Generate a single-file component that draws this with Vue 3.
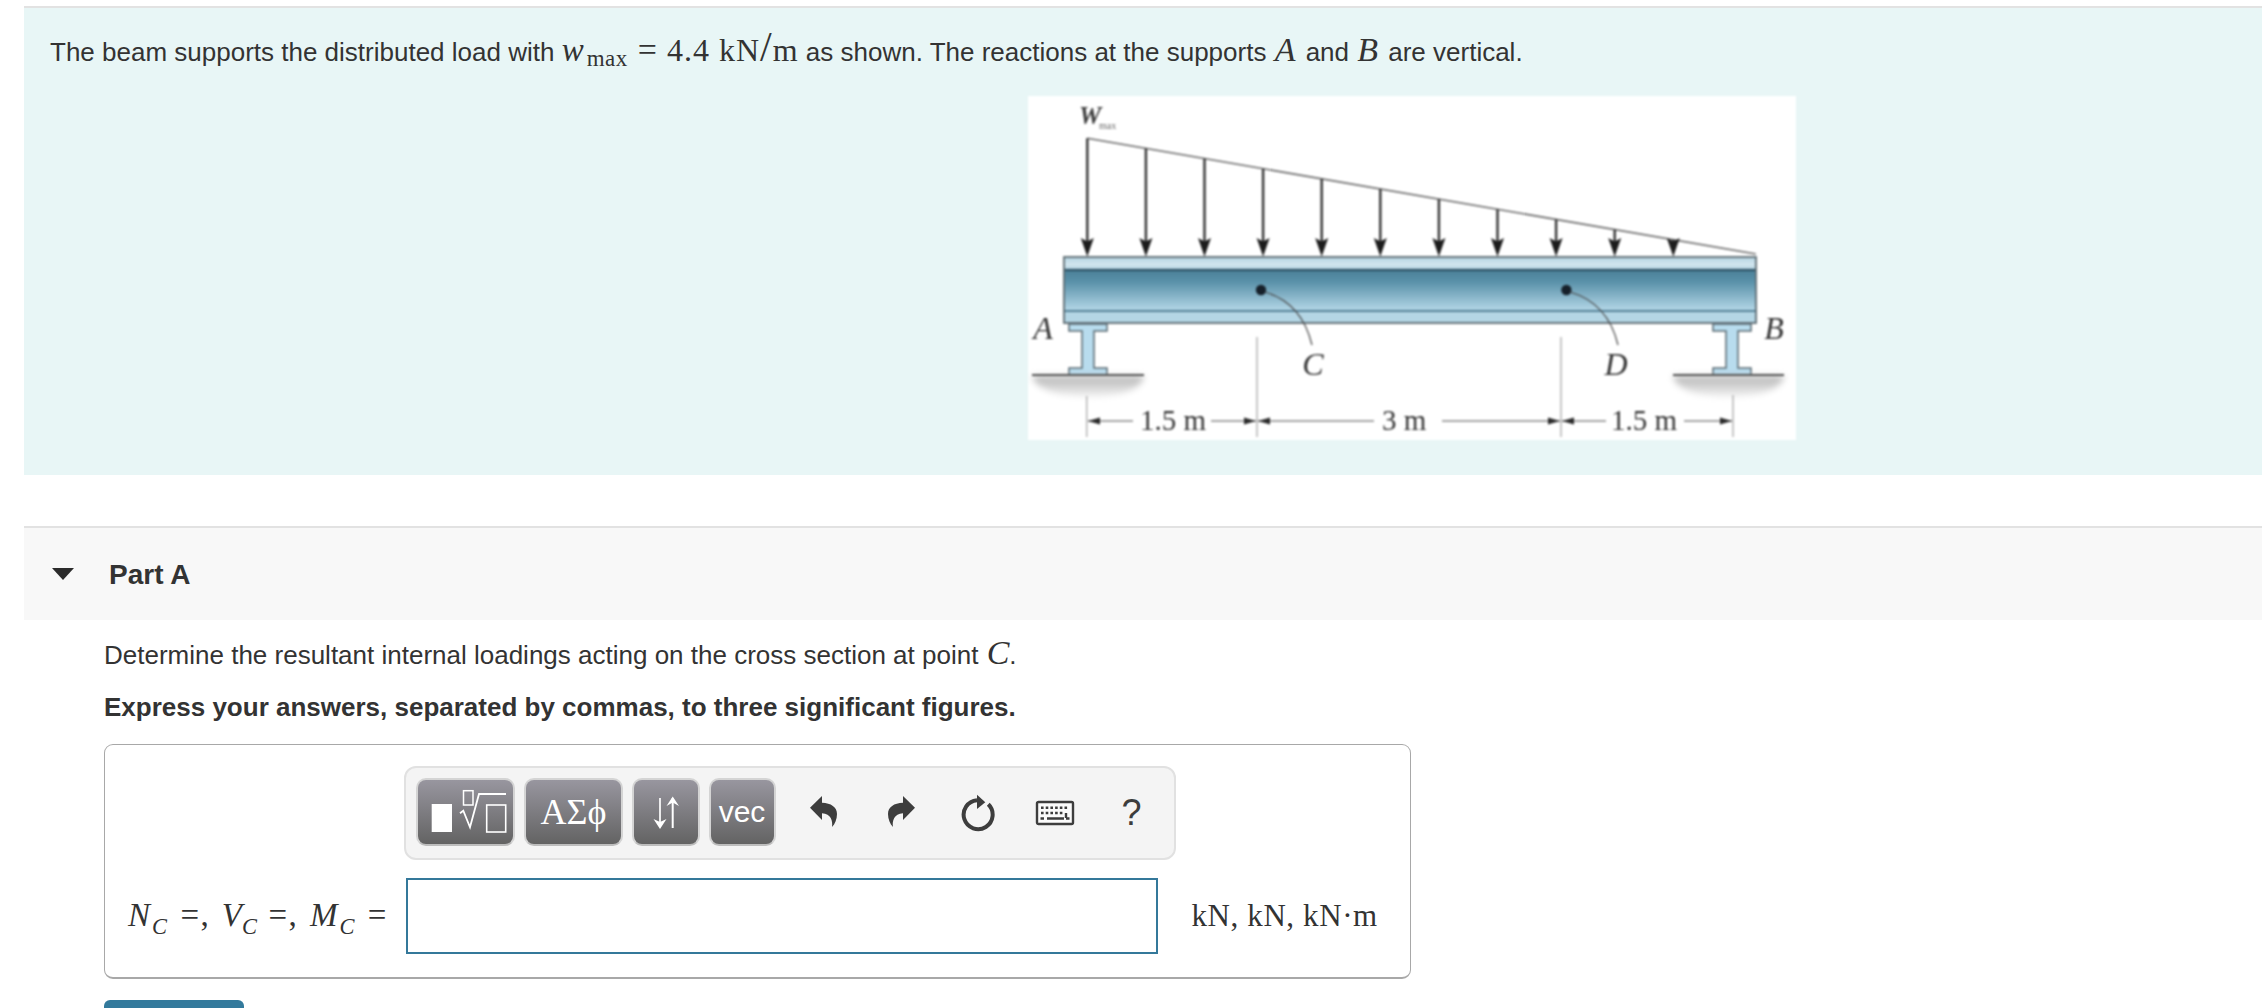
<script setup>
const arrows = Array.from({ length: 11 }, (_, i) => {
  const x = 59.3 + 58.6 * i
  const top = 42.3 + (x - 59.3) * (115.7 / 668.5)
  return { x, top }
})
const supports = [41, 685]
</script>

<template>
  <main class="page">
    <section class="intro">
      <p class="statement">
        The beam supports the distributed load with
        <span class="math"><i class="w">w</i><span class="lower">max</span><span class="eq">=</span>4.4 kN<span class="slash">/</span>m</span>
        as shown. The reactions at the supports <i class="var">A</i> and <i class="var">B</i> are vertical.
      </p>
      <div class="figure">
        <svg class="diagram" width="768" height="344" viewBox="0 0 768 344">
          <defs>
            <linearGradient id="web" x1="0" y1="0" x2="0" y2="1">
              <stop offset="0" stop-color="#4a8098" />
              <stop offset="0.3" stop-color="#5b92aa" />
              <stop offset="1" stop-color="#b5d8e8" />
            </linearGradient>
            <linearGradient id="flange" x1="0" y1="0" x2="0" y2="1">
              <stop offset="0" stop-color="#b4d4e2" />
              <stop offset="0.6" stop-color="#d3e6ef" />
              <stop offset="1" stop-color="#a8ccdc" />
            </linearGradient>
            <linearGradient id="shadow" x1="0" y1="0" x2="0" y2="1">
              <stop offset="0" stop-color="#b4b4b4" />
              <stop offset="1" stop-color="#f4f4f4" />
            </linearGradient>
          </defs>

          <text x="51" y="28" class="load-label">W</text>
          <text x="71" y="33" class="load-sub">max</text>

          <line x1="59.3" y1="42.3" x2="727.8" y2="158" class="load-line" />
          <g v-for="a in arrows" :key="a.x">
            <line :x1="a.x" :y1="a.top" :x2="a.x" y2="150" class="arrow-shaft" />
            <path :d="`M${a.x - 6.5} 142 L${a.x} 145.5 L${a.x + 6.5} 142 L${a.x} 160.5 Z`" fill="#1c1c1c" />
          </g>

          <rect x="36" y="161" width="692" height="13" fill="url(#flange)" />
          <rect x="36" y="174" width="692" height="41" fill="url(#web)" />
          <rect x="36" y="215" width="692" height="12" fill="#b4d6e5" />
          <line x1="36" y1="174" x2="728" y2="174" stroke="#2b4d5f" stroke-width="2" />
          <line x1="36" y1="215" x2="728" y2="215" stroke="#34657c" stroke-width="1.6" />
          <rect x="36" y="161" width="692" height="66" fill="none" stroke="#5c6a70" stroke-width="1.8" />

          <g v-for="s in supports" :key="s">
            <path
              :d="`M${s} 228 h38 v7 h-13 v37 h13 v7 h-38 v-7 h13 v-37 h-13 Z`"
              fill="#b8dcee"
              stroke="#5a6a72"
              stroke-width="1.5"
            />
          </g>

          <path d="M4 280 H116 Q112 300 62 301 Q10 300 4 280 Z" fill="url(#shadow)" class="soft" />
          <path d="M645 280 H756 Q752 300 700 301 Q650 300 645 280 Z" fill="url(#shadow)" class="soft" />
          <line x1="4" y1="279" x2="116" y2="279" class="ground" />
          <line x1="645" y1="279" x2="756" y2="279" class="ground" />

          <circle cx="233" cy="194" r="5.2" fill="#16202a" />
          <circle cx="538.4" cy="194" r="5.2" fill="#16202a" />
          <path d="M237 196 Q274 207 284 249" class="leader" />
          <path d="M542 196 Q580 207 590 249" class="leader" />

          <text x="285" y="279" class="label" text-anchor="middle">C</text>
          <text x="588" y="279" class="label" text-anchor="middle">D</text>
          <text x="15" y="243" class="label" text-anchor="middle">A</text>
          <text x="746" y="243" class="label" text-anchor="middle">B</text>

          <line x1="58.7" y1="300" x2="58.7" y2="341" class="tick" />
          <line x1="229" y1="241" x2="229" y2="341" class="tick" />
          <line x1="533" y1="241" x2="533" y2="341" class="tick" />
          <line x1="705" y1="299" x2="705" y2="341" class="tick" />

          <line x1="60" y1="325" x2="105" y2="325" class="dim" />
          <line x1="183" y1="325" x2="228" y2="325" class="dim" />
          <line x1="230" y1="325" x2="346" y2="325" class="dim" />
          <line x1="414" y1="325" x2="532" y2="325" class="dim" />
          <line x1="534" y1="325" x2="578" y2="325" class="dim" />
          <line x1="656" y1="325" x2="704" y2="325" class="dim" />

          <path d="M60 325 l12 -3.5 v7 Z M228 325 l-12 -3.5 v7 Z M230 325 l12 -3.5 v7 Z M532 325 l-12 -3.5 v7 Z M534 325 l12 -3.5 v7 Z M704 325 l-12 -3.5 v7 Z" fill="#2a2a2a" />

          <text x="112" y="334" class="dim-text">1.5 m</text>
          <text x="354" y="334" class="dim-text">3 m</text>
          <text x="583" y="334" class="dim-text">1.5 m</text>
        </svg>
      </div>
    </section>

    <section class="part">
      <header class="part-head">
        <span class="caret"></span>
        <h2>Part A</h2>
      </header>
      <div class="part-body">
        <p class="question">Determine the resultant internal loadings acting on the cross section at point <i class="var end">C</i>.</p>
        <p class="instruction">Express your answers, separated by commas, to three significant figures.</p>

        <div class="answer">
          <div class="toolbar">
            <button class="tool tool-templates" type="button" aria-label="Templates">
              <svg width="94" height="64" viewBox="0 0 94 64">
                <rect x="12.7" y="24" width="20.3" height="28" fill="#fff" />
                <rect x="44.5" y="10.7" width="9.5" height="14.3" fill="none" stroke="#fff" stroke-width="1.5" />
                <path d="M41 33.3 L44.3 30.7 L51 47.3 L60 14 H87" fill="none" stroke="#fff" stroke-width="1.8" />
                <rect x="67.7" y="25" width="19" height="27" fill="none" stroke="#fff" stroke-width="1.6" />
              </svg>
            </button>
            <button class="tool tool-greek" type="button">ΑΣϕ</button>
            <button class="tool tool-arrows" type="button" aria-label="Arrows">
              <svg width="30" height="40" viewBox="0 0 30 40">
                <path d="M9 6 V34" stroke="#fff" stroke-width="1.7" />
                <path d="M2.5 27 L9 30 L15.5 27 L9 37 Z" fill="#fff" />
                <path d="M21.7 36 V6" stroke="#fff" stroke-width="2" />
                <path d="M15.5 14 L21.7 4.5 L28 14 L21.7 10.5 Z" fill="#fff" />
              </svg>
            </button>
            <button class="tool tool-vec" type="button">vec</button>

            <div class="actions">
              <svg width="30" height="36" viewBox="0 0 30 36">
                <path d="M1 12.7 L13 1 V7.7 C22 8 28 12 28 19 C28 24 26 29 23 32 C24 26 22 19 13 18.3 V25 Z" fill="#3d3d3d" />
              </svg>
              <svg width="30" height="36" viewBox="0 0 30 36">
                <path d="M29 12.7 L17 1 V7.7 C8 8 2 12 2 19 C2 24 4 29 7 32 C6 26 8 19 17 18.3 V25 Z" fill="#3d3d3d" />
              </svg>
              <svg width="36" height="38" viewBox="0 0 36 38">
                <path d="M17 6.2 A14.5 14.5 0 1 0 28.3 10.3" fill="none" stroke="#3d3d3d" stroke-width="4" />
                <path d="M17 0.7 L25.3 8.3 L17 15 Z" fill="#3d3d3d" />
              </svg>
              <svg width="40" height="26" viewBox="0 0 40 26">
                <rect x="2" y="2" width="36" height="22" rx="1.5" fill="#fbfbfb" stroke="#3d3d3d" stroke-width="2.4" />
                <path d="M6 7.7 H34 M6 13 H29" stroke="#3d3d3d" stroke-width="2.4" stroke-dasharray="2.6 2.1" />
                <path d="M5.5 18.5 H9 M12 18.5 H29 M31 18.5 H34.5 M31 13 V18" stroke="#3d3d3d" stroke-width="2.4" />
              </svg>
              <span class="help">?</span>
            </div>
          </div>

          <div class="answer-row">
            <span class="prefix">
              <span class="sym wide"><i>N</i><sub><i>C</i></sub></span>
              <span class="op">=,</span>
              <span class="sym"><i>V</i><sub><i>C</i></sub></span>
              <span class="op">=,</span>
              <span class="sym wide"><i>M</i><sub><i>C</i></sub></span>
              <span class="op">=</span>
            </span>
            <input class="field" type="text" aria-label="Answer" />
            <span class="units">kN, kN, kN·m</span>
          </div>
        </div>

        <button class="submit" type="button" aria-label="Submit"></button>
      </div>
    </section>
  </main>
</template>

<style>
html, body {
  margin: 0;
  height: 1008px;
  overflow: hidden;
  background: #fff;
}
</style>

<style scoped>
.page {
  padding: 6px 0 0 24px;
  font-family: "Liberation Sans", Arial, sans-serif;
  font-size: 26px;
  color: #333;
}
p { margin: 0; }
.intro {
  height: 467px;
  border-top: 2px solid #e2e2e2;
  background: #e8f6f6;
  box-sizing: content-box;
}
.statement {
  padding: 25.5px 0 0 26px;
  line-height: 36px;
  height: 62.5px;
  white-space: nowrap;
}
.math {
  font-family: "Liberation Serif", "Times New Roman", serif;
  font-size: 32px;
  line-height: 0;
  letter-spacing: 1px;
}
.w { font-size: 33px; letter-spacing: 3px; }
.lower {
  font-size: 23px;
  line-height: 0;
  letter-spacing: 0.5px;
  vertical-align: -5px;
}
.var {
  display: inline-block;
  font-family: "Liberation Serif", "Times New Roman", serif;
  font-size: 34px;
  line-height: 0;
  margin: 0 2px 0 1px;
  letter-spacing: 1px;
}
.var.end { margin-right: 0; letter-spacing: 0; }
sub {
  font-size: 72%;
  line-height: 0;
}
.eq { margin: 0 9px 0 10px; font-size: 34px; }
.slash { font-size: 42px; line-height: 0; font-weight: 300; }
.figure {
  display: flex;
  justify-content: flex-start;
  padding: 0 0 0 1004px;
}
.diagram {
  display: block;
  background: #fff;
  filter: blur(0.9px);
}
.load-label {
  font: italic bold 25px "Liberation Serif", serif;
  fill: #3a3a3a;
}
.load-sub {
  font: 10px "Liberation Serif", serif;
  fill: #666;
}
.load-line { stroke: #6a6a6a; stroke-width: 1.6; }
.arrow-shaft { stroke: #333; stroke-width: 2.4; }
.ground { stroke: #555; stroke-width: 2; }
.soft { filter: blur(3px); }
.leader { fill: none; stroke: #4a4a4a; stroke-width: 1.2; }
.label {
  font: italic 32px "Liberation Serif", serif;
  fill: #333;
}
.tick { stroke: #b5b5b5; stroke-width: 1.5; }
.dim { stroke: #888; stroke-width: 1.3; }
.dim-text {
  font: 29px "Liberation Serif", serif;
  fill: #333;
}
.part {
  margin-top: 51px;
}
.part-head {
  display: flex;
  align-items: center;
  height: 92px;
  border-top: 2px solid #e2e2e2;
  background: #f8f8f8;
}
.caret {
  width: 0;
  height: 0;
  margin-left: 28px;
  margin-right: 35px;
  border-left: 11px solid transparent;
  border-right: 11px solid transparent;
  border-top: 12px solid #2b2b2b;
}
h2 {
  margin: 2px 0 0;
  font-size: 28px;
  font-weight: 700;
  color: #333;
}
.part-body {
  padding: 0 0 0 80px;
}
.question {
  padding-top: 16.5px;
  line-height: 36px;
}
.instruction {
  margin-top: 16px;
  line-height: 36px;
  font-weight: 700;
}
.answer {
  box-sizing: border-box;
  width: 1307px;
  height: 235px;
  margin-top: 19px;
  padding: 21px 22px 0 23px;
  background: #fff;
  border: 1.5px solid #a8a8a8;
  border-bottom-width: 2.5px;
  border-radius: 9px;
}
.toolbar {
  box-sizing: border-box;
  display: flex;
  align-items: center;
  gap: 9px;
  width: 772px;
  height: 94.5px;
  margin-left: 276px;
  padding: 0 0 0 10px;
  background: #f4f4f4;
  border: 2px solid #e1e1e1;
  border-radius: 12px;
}
.tool {
  box-sizing: border-box;
  display: flex;
  align-items: center;
  justify-content: center;
  height: 68px;
  margin-top: -1.5px;
  padding: 0;
  color: #fff;
  background: linear-gradient(#98969f, #636363);
  border: 2px solid #d4d4d4;
  border-bottom-color: #bdbdbd;
  border-radius: 10px;
}
.tool-templates { width: 99px; }
.tool-greek {
  width: 99px;
  font: 36px "Liberation Serif", serif;
}
.tool-arrows { width: 67.5px; }
.tool-vec {
  width: 67px;
  font: 30px "Liberation Sans", sans-serif;
}
.actions {
  display: grid;
  grid-template-columns: repeat(5, 77px);
  justify-items: center;
  align-items: center;
  margin-left: 0.5px;
}
.help {
  font-size: 36px;
  line-height: 40px;
  color: #3d3d3d;
}
.answer-row {
  display: flex;
  align-items: center;
  margin-top: 17.5px;
}
.prefix {
  display: flex;
  align-items: baseline;
  gap: 11.5px;
  width: 278px;
  font: 33px "Liberation Serif", serif;
  color: #333;
  white-space: nowrap;
}
.prefix sub { font-size: 68%; }
.sym.wide { letter-spacing: 2px; }
.op { letter-spacing: 1.5px; }
.field {
  box-sizing: border-box;
  width: 752px;
  height: 76px;
  padding: 0 10px;
  background: #fff;
  border: 2px solid #34789a;
  border-radius: 0;
  outline: none;
}
.units {
  margin-left: 33.5px;
  font: 31px "Liberation Serif", serif;
  letter-spacing: 0.6px;
  color: #333;
  white-space: nowrap;
}
.submit {
  display: block;
  width: 140px;
  height: 48px;
  margin-top: 21.5px;
  background: #337a9c;
  border: none;
  border-radius: 6px;
}
</style>
